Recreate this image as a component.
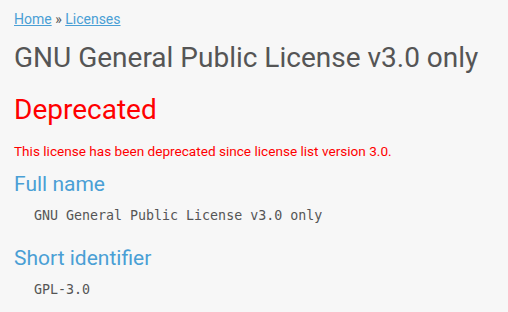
export default function App() {
  return (
    <div className="min-h-[312px] bg-[#f7f7f7] px-[14px] pt-[10px] font-['Roboto',sans-serif] text-[#555]">
      <div className="text-[14px] leading-[18px] text-[#555]">
        <a href="#" className="text-[#4a9fd5] underline">Home</a> »{' '}
        <a href="#" className="text-[#4a9fd5] underline">Licenses</a>
      </div>
      <h1 className="mt-[14px] text-[28px] leading-[32px] text-[#555]">GNU General Public License v3.0 only</h1>
      <h2 className="mt-[20px] text-[28px] leading-[32px] text-[#ff0000]">Deprecated</h2>
      <p className="mt-[16px] text-[13.6px] leading-[18px] text-[#ff0000]">
        This license has been deprecated since license list version 3.0.
      </p>
      <h3 className="mt-[12px] text-[21px] leading-[24px] text-[#4a9fd5]">Full name</h3>
      <div className="mt-[11px] pl-[20px] font-['DejaVu_Sans_Mono',monospace] text-[13.3px] leading-[18px]">
        GNU General Public License v3.0 only
      </div>
      <h3 className="mt-[21px] text-[21px] leading-[24px] text-[#4a9fd5]">Short identifier</h3>
      <div className="mt-[11px] pl-[20px] font-['DejaVu_Sans_Mono',monospace] text-[13.3px] leading-[18px]">
        GPL-3.0
      </div>
    </div>
  );
}
